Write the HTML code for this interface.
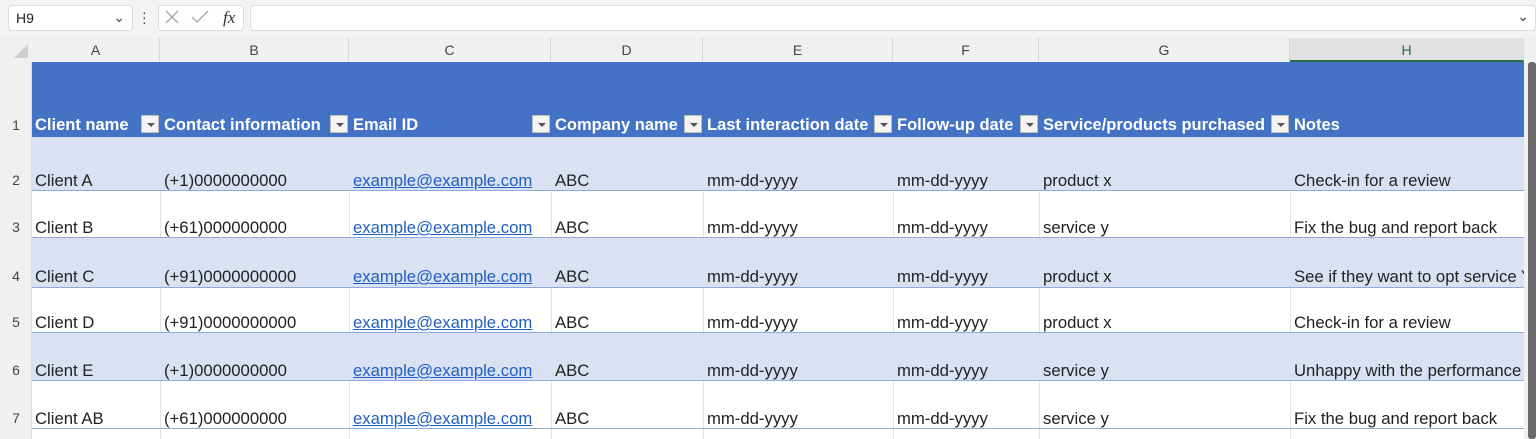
<!DOCTYPE html>
<html><head><meta charset="utf-8"><style>
*{margin:0;padding:0;box-sizing:border-box}
body{width:1536px;height:439px;overflow:hidden;background:#f3f3f3;font-family:"Liberation Sans",sans-serif;position:relative}
.a{position:absolute}
.t{position:absolute;font-size:16.7px;color:#222;white-space:nowrap}
.h{position:absolute;font-size:16.5px;color:#fff;font-weight:bold;white-space:nowrap}
.dd{position:absolute;width:18px;height:18px;background:#f4f4f4;border:1px solid #bbb}
.dd:after{content:"";position:absolute;left:5px;top:7px;border-left:4px solid transparent;border-right:4px solid transparent;border-top:4px solid #555}
.cl{position:absolute;top:38px;height:24px;font-size:14px;color:#444;text-align:center;line-height:24px;border-right:1px solid #d8d8d8}
.rn{position:absolute;left:0;width:32px;font-size:14px;color:#444;text-align:center}
a{color:#1f5fbf;text-decoration:underline}
</style></head><body>
<div class="a" style="left:8px;top:5px;width:125px;height:26px;background:#fff;border:1px solid #ddd;border-radius:4px;font-size:14px;line-height:24px;padding-left:7px;color:#222">H9<span style="position:absolute;right:7px;top:-1px;color:#444">&#8964;</span></div>
<div class="a" style="left:142px;top:10px;font-size:14px;color:#333;line-height:5px">·<br>·<br>·</div>
<div class="a" style="left:158px;top:5px;width:86px;height:26px;background:#fff;border:1px solid #ddd;border-radius:4px"></div>
<svg class="a" style="left:163px;top:9px" width="80" height="18"><path d="M3 2L15 14M15 2L3 14" stroke="#aaa" stroke-width="1.5"/><path d="M29 8L34 13L45 2" stroke="#aaa" stroke-width="1.5" fill="none"/><text x="60" y="14" font-family="Liberation Serif" font-style="italic" font-size="17" fill="#333">fx</text></svg>
<div class="a" style="left:250px;top:5px;width:1286px;height:26px;background:#fff;border:1px solid #ddd;border-radius:4px"><span style="position:absolute;right:6px;top:2px;color:#444;font-size:14px">&#8964;</span></div>
<div class="a" style="left:0;top:38px;width:1524px;height:401px;background:#fff"></div>
<div class="a" style="left:0;top:38px;width:1524px;height:24px;background:#f0f0f0"></div>
<div class="a" style="left:0;top:62px;width:32px;height:377px;background:#f0f0f0;border-right:1px solid #ddd"></div>
<div class="a" style="left:14px;top:44px;width:0;height:0;border-left:14px solid transparent;border-bottom:14px solid #cfcfcf"></div>
<div class="cl" style="left:32px;width:128px">A</div><div class="cl" style="left:160px;width:189px">B</div><div class="cl" style="left:349px;width:202px">C</div><div class="cl" style="left:551px;width:152px">D</div><div class="cl" style="left:703px;width:190px">E</div><div class="cl" style="left:893px;width:146px">F</div><div class="cl" style="left:1039px;width:251px">G</div><div class="cl" style="left:1290px;width:234px;background:#e1e1e1;color:#217346;border-bottom:2px solid #217346">H</div>
<div class="a" style="left:1524px;top:38px;width:12px;height:401px;background:#f0f0f0"></div>
<div class="a" style="left:1528px;top:62px;width:8px;height:377px;background:#6a6a6a;border-radius:3px"></div>
<div class="a" style="left:160px;top:62px;width:1px;height:377px;background:#e2e2e2"></div>
<div class="a" style="left:349px;top:62px;width:1px;height:377px;background:#e2e2e2"></div>
<div class="a" style="left:551px;top:62px;width:1px;height:377px;background:#e2e2e2"></div>
<div class="a" style="left:703px;top:62px;width:1px;height:377px;background:#e2e2e2"></div>
<div class="a" style="left:893px;top:62px;width:1px;height:377px;background:#e2e2e2"></div>
<div class="a" style="left:1039px;top:62px;width:1px;height:377px;background:#e2e2e2"></div>
<div class="a" style="left:1290px;top:62px;width:1px;height:377px;background:#e2e2e2"></div>
<div class="a" style="left:32px;top:62px;width:1492px;height:75px;background:#4472c4"></div>
<div class="a" style="left:32px;top:137px;width:1492px;height:54px;background:#d9e1f2;border-bottom:1px solid #8eaadb"></div>
<div class="a" style="left:32px;top:191px;width:1492px;height:47px;border-bottom:1px solid #8eaadb"></div>
<div class="a" style="left:32px;top:238px;width:1492px;height:50px;background:#d9e1f2;border-bottom:1px solid #8eaadb"></div>
<div class="a" style="left:32px;top:288px;width:1492px;height:45px;border-bottom:1px solid #8eaadb"></div>
<div class="a" style="left:32px;top:333px;width:1492px;height:48px;background:#d9e1f2;border-bottom:1px solid #8eaadb"></div>
<div class="a" style="left:32px;top:381px;width:1492px;height:48px;border-bottom:1px solid #8eaadb"></div>
<div class="h" style="left:35px;top:116px">Client name</div><div class="dd" style="left:141px;top:115px"></div>
<div class="h" style="left:164px;top:116px">Contact information</div><div class="dd" style="left:330px;top:115px"></div>
<div class="h" style="left:353px;top:116px">Email ID</div><div class="dd" style="left:532px;top:115px"></div>
<div class="h" style="left:555px;top:116px">Company name</div><div class="dd" style="left:684px;top:115px"></div>
<div class="h" style="left:707px;top:116px">Last interaction date</div><div class="dd" style="left:874px;top:115px"></div>
<div class="h" style="left:897px;top:116px">Follow-up date</div><div class="dd" style="left:1020px;top:115px"></div>
<div class="h" style="left:1043px;top:116px">Service/products purchased</div><div class="dd" style="left:1271px;top:115px"></div>
<div class="h" style="left:1294px;top:116px">Notes</div>
<div class="rn" style="top:117px">1</div>
<div class="rn" style="top:172px">2</div><div class="rn" style="top:219px">3</div><div class="rn" style="top:268px">4</div><div class="rn" style="top:314px">5</div><div class="rn" style="top:362px">6</div><div class="rn" style="top:410px">7</div>
<div class="t" style="left:35px;top:171px">Client A</div><div class="t" style="left:164px;top:171px">(+1)0000000000</div><div class="t" style="left:353px;top:171px"><a>example@example.com</a></div><div class="t" style="left:555px;top:171px">ABC</div><div class="t" style="left:707px;top:171px">mm-dd-yyyy</div><div class="t" style="left:897px;top:171px">mm-dd-yyyy</div><div class="t" style="left:1043px;top:171px">product x</div><div class="t" style="left:1294px;top:171px">Check-in for a review</div>
<div class="t" style="left:35px;top:218px">Client B</div><div class="t" style="left:164px;top:218px">(+61)000000000</div><div class="t" style="left:353px;top:218px"><a>example@example.com</a></div><div class="t" style="left:555px;top:218px">ABC</div><div class="t" style="left:707px;top:218px">mm-dd-yyyy</div><div class="t" style="left:897px;top:218px">mm-dd-yyyy</div><div class="t" style="left:1043px;top:218px">service y</div><div class="t" style="left:1294px;top:218px">Fix the bug and report back</div>
<div class="t" style="left:35px;top:267px">Client C</div><div class="t" style="left:164px;top:267px">(+91)0000000000</div><div class="t" style="left:353px;top:267px"><a>example@example.com</a></div><div class="t" style="left:555px;top:267px">ABC</div><div class="t" style="left:707px;top:267px">mm-dd-yyyy</div><div class="t" style="left:897px;top:267px">mm-dd-yyyy</div><div class="t" style="left:1043px;top:267px">product x</div><div class="t" style="left:1294px;top:267px;width:230px;overflow:hidden">See if they want to opt service Y</div>
<div class="t" style="left:35px;top:313px">Client D</div><div class="t" style="left:164px;top:313px">(+91)0000000000</div><div class="t" style="left:353px;top:313px"><a>example@example.com</a></div><div class="t" style="left:555px;top:313px">ABC</div><div class="t" style="left:707px;top:313px">mm-dd-yyyy</div><div class="t" style="left:897px;top:313px">mm-dd-yyyy</div><div class="t" style="left:1043px;top:313px">product x</div><div class="t" style="left:1294px;top:313px">Check-in for a review</div>
<div class="t" style="left:35px;top:361px">Client E</div><div class="t" style="left:164px;top:361px">(+1)0000000000</div><div class="t" style="left:353px;top:361px"><a>example@example.com</a></div><div class="t" style="left:555px;top:361px">ABC</div><div class="t" style="left:707px;top:361px">mm-dd-yyyy</div><div class="t" style="left:897px;top:361px">mm-dd-yyyy</div><div class="t" style="left:1043px;top:361px">service y</div><div class="t" style="left:1294px;top:361px;width:230px;overflow:hidden">Unhappy with the performance</div>
<div class="t" style="left:35px;top:409px">Client AB</div><div class="t" style="left:164px;top:409px">(+61)000000000</div><div class="t" style="left:353px;top:409px"><a>example@example.com</a></div><div class="t" style="left:555px;top:409px">ABC</div><div class="t" style="left:707px;top:409px">mm-dd-yyyy</div><div class="t" style="left:897px;top:409px">mm-dd-yyyy</div><div class="t" style="left:1043px;top:409px">service y</div><div class="t" style="left:1294px;top:409px">Fix the bug and report back</div>
</body></html>
